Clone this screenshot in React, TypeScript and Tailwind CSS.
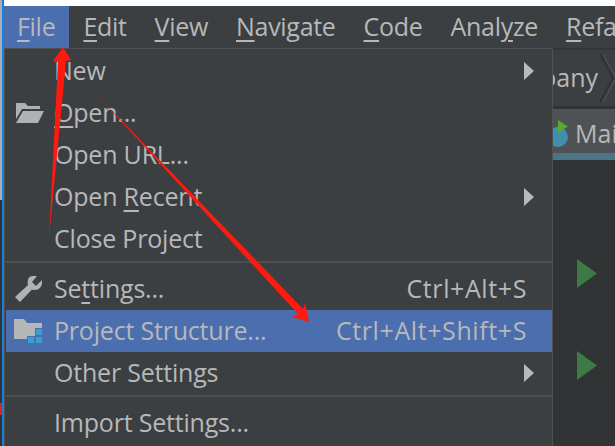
const menus = [
  { pre: "", u: "F", post: "ile" },
  { pre: "", u: "E", post: "dit" },
  { pre: "", u: "V", post: "iew" },
  { pre: "", u: "N", post: "avigate" },
  { pre: "", u: "C", post: "ode" },
  { pre: "Anal", u: "y", post: "ze" },
  { pre: "", u: "R", post: "efactor" },
];

const U = ({ children }: { children: string }) => (
  <span className="underline decoration-2 underline-offset-[4px]">{children}</span>
);

const Chevron = () => (
  <svg width="10" height="18" viewBox="0 0 10 18" className="shrink-0">
    <path d="M0 0 L10 9 L0 18 Z" fill="#b9b9b9" />
  </svg>
);

const FolderOpen = () => (
  <svg width="28" height="20" viewBox="0 0 28 20" className="ml-[4px]">
    <path d="M0 0 H9 L12 3 H24 V6 H6 L0 16 Z" fill="#afb1b3" />
    <path d="M7 8 H28 L22 20 H0 Z" fill="#afb1b3" />
  </svg>
);

const Wrench = () => (
  <svg width="27" height="28" viewBox="0 0 27 28">
    <path
      d="M17 1 L22 1 L17 7 L21 11 L27 5 C28 10 25 15 20 15 C18.5 15 17.5 14.8 17 14.5 L5 27 L0 22 L13 10 C12 5 13 2 17 1 Z"
      fill="#afb1b3"
    />
  </svg>
);

const ProjectIcon = () => (
  <svg width="28" height="24" viewBox="0 0 28 24">
    <path d="M0 0 H10 L13 4 H28 V9 H21 V17 H13 V20 H0 Z" fill="#b4b6b8" />
    <rect x="22" y="10" width="6" height="6" fill="#389fd6" />
    <rect x="14" y="18" width="6" height="6" fill="#389fd6" />
    <rect x="22" y="18" width="6" height="6" fill="#389fd6" />
  </svg>
);

const Play = () => (
  <svg width="20" height="29" viewBox="0 0 20 29">
    <path d="M0 0 L20 14.5 L0 29 Z" fill="#3d7a44" />
  </svg>
);

const Item = ({
  label,
  icon,
  shortcut,
  arrow,
  active,
}: {
  label: React.ReactNode;
  icon?: React.ReactNode;
  shortcut?: string;
  arrow?: boolean;
  active?: boolean;
}) => (
  <div className={`flex h-[42px] items-center pr-[18px] ${active ? "bg-[#4b6eaf]" : ""}`}>
    <div className="flex w-[49px] justify-center pr-[5px]">{icon}</div>
    <span className="-ml-px flex-1 whitespace-nowrap tracking-[-0.2px]">{label}</span>
    {shortcut && <span className="pr-[7px] tracking-[0.6px]">{shortcut}</span>}
    {arrow && <Chevron />}
  </div>
);

const Separator = () => <div className="mb-[5px] mt-[1px] h-[2px] bg-[#4c4e50]" />;

export default function App() {
  return (
    <div className="relative flex h-[446px] w-[615px] overflow-hidden bg-white font-['Open_Sans',sans-serif] text-[25px] text-[#b7b8b9]">
      {/* Desktop edge and window border */}
      <div className="flex w-[2px] shrink-0 flex-col">
        <div className="h-[200px] bg-[#a9afb4]" />
        <div className="h-[203px] bg-[#30343a]" />
        <div className="h-[12px] bg-[#e0201c]" />
        <div className="flex-1 bg-[#30343a]" />
      </div>
      <div className="w-[2px] shrink-0 bg-[#1a7fd8]" />

      <div className="flex min-w-0 flex-1 flex-col">
        <div className="h-[6px] shrink-0 bg-white" />

        {/* Menu bar */}
        <div className="flex h-[42px] shrink-0 items-center bg-[#3c3f41] tracking-[-0.3px]">
          {menus.map((m, i) => (
            <div
              key={m.post}
              className={`flex h-full items-center whitespace-pre px-[14px] ${i === 0 ? "-ml-px bg-[#4b6eaf]" : ""}`}
            >
              {m.pre}
              <U>{m.u}</U>
              {m.post}
            </div>
          ))}
        </div>

        <div className="flex flex-1">
          {/* File menu */}
          <div className="w-[549px] shrink-0 border-x border-t border-[#515151] bg-[#3c3f41] pl-px pt-px">
            <Item label="New" arrow />
            <Item label={<><U>O</U>pen...</>} icon={<FolderOpen />} />
            <Item label="Open URL..." />
            <Item label={<>Open <U>R</U>ecent</>} arrow />
            <Item label="Close Project" />
            <Separator />
            <Item label={<>Se<U>t</U>tings...</>} icon={<Wrench />} shortcut="Ctrl+Alt+S" />
            <Item label="Project Structure..." icon={<ProjectIcon />} shortcut="Ctrl+Alt+Shift+S" active />
            <Item label="Other Settings" arrow />
            <Separator />
            <Item label="Import Settings..." />
          </div>

          {/* Editor area behind the menu */}
          <div className="flex min-w-0 flex-1 flex-col overflow-hidden bg-[#313335]">
            <div className="h-[2px] bg-[#333537]" />
            <div className="flex h-[56px] items-center whitespace-nowrap bg-[#3c3f41]">
              <span className="-ml-[12px]">pany</span>
              <svg width="16" height="50" viewBox="0 0 16 50" className="ml-[2px] shrink-0">
                <path d="M0 1 L13 25 L0 49" fill="none" stroke="#2f3133" strokeWidth="2" />
                <path d="M3 1 L16 25 L3 49" fill="none" stroke="#515658" strokeWidth="1" />
              </svg>
            </div>
            <div className="mt-[3px] flex h-[44px] items-center overflow-hidden whitespace-nowrap bg-[#4e5254]">
              <svg width="19" height="44" viewBox="0 0 19 44" className="shrink-0">
                <circle cx="5" cy="28" r="10" fill="#3f8fae" />
                <path d="M5 11 L15 17.5 L5 24 Z" fill="#59a82f" />
              </svg>
              <span className="ml-[3px] pt-[6px]">Main</span>
            </div>
            <div className="h-[7px] bg-[#4a7687]" />
            <div className="flex flex-1 flex-col items-start gap-[63px] pl-[24px] pt-[99px]">
              <Play />
              <Play />
            </div>
          </div>
        </div>
      </div>

      {/* Red annotation arrows */}
      <svg className="absolute left-0 top-0" width="615" height="446" viewBox="0 0 615 446">
        <path d="M49 238 L58 62 L53 61 L63 47 L71 60 L66 61 Z" fill="#ff1a10" />
        <path d="M96 94 L303 309 L305 303 L309 322 L292 317 L298 314 Z" fill="#ff1a10" />
      </svg>
    </div>
  );
}
